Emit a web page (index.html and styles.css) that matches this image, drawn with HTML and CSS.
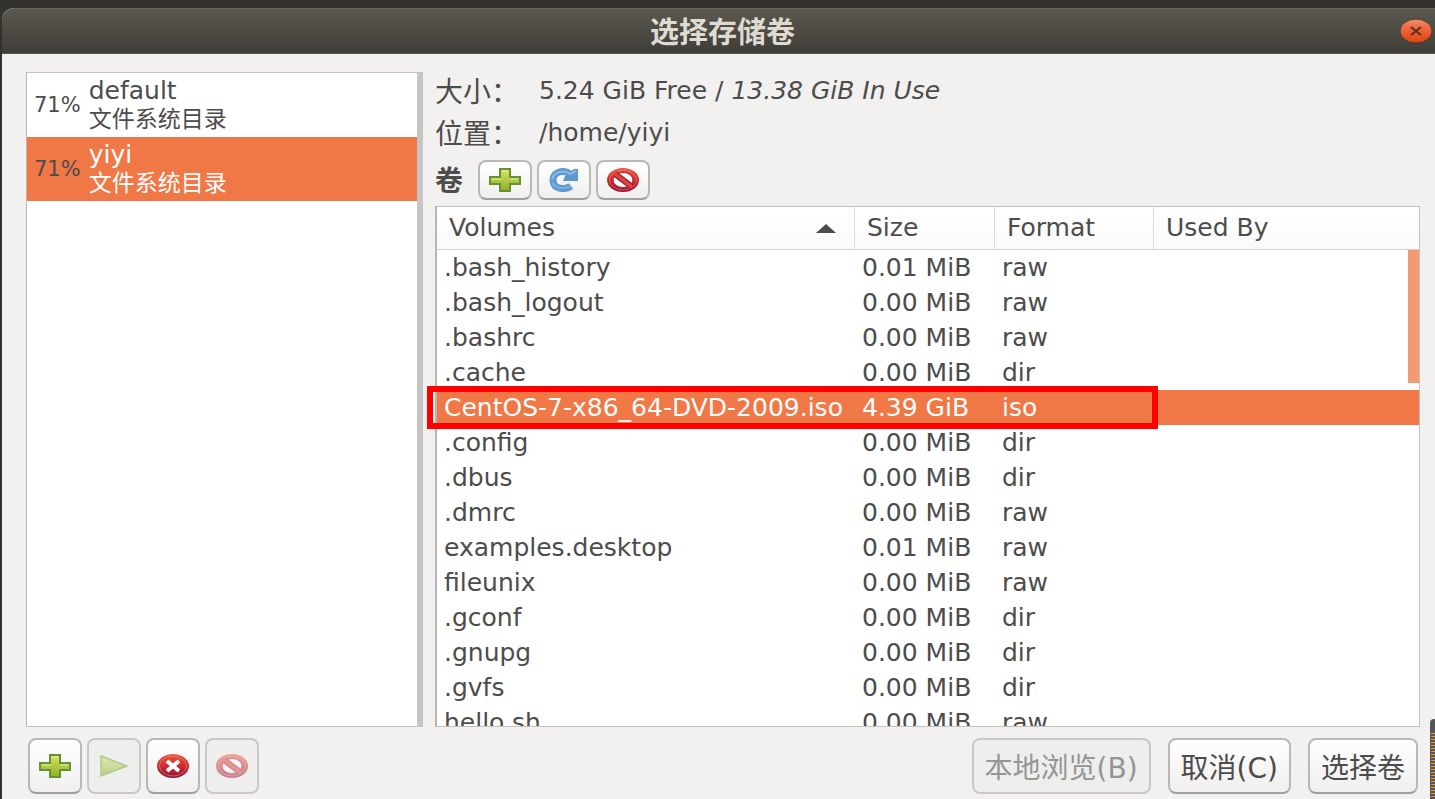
FILE: index.html
```
<!DOCTYPE html>
<html lang="zh-CN">
<head>
  <meta charset="UTF-8">
  <title>选择存储卷</title>
  <link rel="stylesheet" href="styles.css">
</head>
<body>

<!-- Shared gradients and icons -->
<svg class="defs" width="0" height="0" aria-hidden="true">
  <defs>
    <linearGradient id="green" x1="0" y1="0" x2="0" y2="1">
      <stop offset="0" stop-color="#d6e665"/>
      <stop offset="1" stop-color="#8fae26"/>
    </linearGradient>
    <linearGradient id="red" x1="0" y1="0" x2="0" y2="1">
      <stop offset="0" stop-color="#ea5a3c"/>
      <stop offset="0.5" stop-color="#cf2b33"/>
      <stop offset="1" stop-color="#8d1238"/>
    </linearGradient>
    <linearGradient id="orange" x1="0" y1="0" x2="0" y2="1">
      <stop offset="0" stop-color="#f58a68"/>
      <stop offset="0.5" stop-color="#ec5f35"/>
      <stop offset="1" stop-color="#dc4410"/>
    </linearGradient>
    <symbol id="icon-add" viewBox="0 0 32 24">
      <path d="M11 1h10v8h10v7H21v7H11v-7H1V9h10z" fill="url(#green)" stroke="#649334" stroke-width="2"/>
      <path d="M13 3h6M3 11h9M21 11h8" stroke="#e8f09a" stroke-width="1"/>
    </symbol>
    <symbol id="icon-stop" viewBox="0 0 32 24">
      <ellipse cx="16" cy="12" rx="16" ry="12" fill="url(#red)"/>
      <ellipse cx="16" cy="12" rx="13.5" ry="10" fill="none" stroke="#f08a7c" stroke-opacity=".55"/>
      <ellipse cx="16" cy="12" rx="10" ry="7.500" fill="#fff" stroke="#b52232" stroke-width="1"/>
      <path d="M8 6l16 12" stroke="#b52232" stroke-width="6"/>
      <path d="M7 5l18 14" stroke="#d9453f" stroke-width="3"/>
    </symbol>
    <symbol id="icon-delete" viewBox="0 0 32 24">
      <ellipse cx="16" cy="12" rx="16" ry="12" fill="url(#red)"/>
      <ellipse cx="16" cy="12" rx="13.5" ry="10" fill="none" stroke="#f08a7c" stroke-opacity=".6"/>
      <path d="M10 7l12 10M22 7L10 17" stroke="#fff" stroke-width="4"/>
    </symbol>
    <symbol id="icon-refresh" viewBox="0 0 32 24">
      <path d="M23 18C18 22 5 22 5 12C5 3 17 1 23 7" fill="none" stroke="#5f98d1" stroke-width="7"/>
      <path d="M23 3L26 1H30V13H15L17 8z" fill="#5f98d1"/>
      <path d="M4 12C5 4 16 1 22 6L28 3" fill="none" stroke="#8fbbe5" stroke-width="2"/>
      <path d="M4 14C6 20 15 22 23 18" fill="none" stroke="#7fafe0" stroke-width="2"/>
    </symbol>
    <symbol id="icon-play" viewBox="0 0 32 24">
      <path d="M3 2l26 10L3 22z" fill="url(#green)" stroke="#6fa83a" stroke-width="1.500"/>
    </symbol>
  </defs>
</svg>

<div class="dialog">
  <header class="titlebar">
    <h1 class="title">选择存储卷</h1>
    <button class="close" aria-label="关闭">
      <svg width="34" height="26" viewBox="0 0 34 26">
        <ellipse cx="17" cy="13" rx="16" ry="12" fill="url(#orange)" stroke="#4b3d35" stroke-width="1"/>
        <path d="M12 9l10 8M22 9l-10 8" stroke="#57331a" stroke-width="2"/>
      </svg>
    </button>
  </header>

  <main class="content">
    <!-- Storage pools -->
    <ul class="pools">
      <li class="pool">
        <span class="percent">71%</span>
        <span class="pool-text"><span class="pool-name">default</span><span class="pool-type">文件系统目录</span></span>
      </li>
      <li class="pool selected">
        <span class="percent">71%</span>
        <span class="pool-text"><span class="pool-name">yiyi</span><span class="pool-type">文件系统目录</span></span>
      </li>
    </ul>

    <section class="details">
      <dl class="info">
        <dt>大小：</dt><dd>5.24 GiB Free / <em>13.38 GiB In Use</em></dd>
        <dt>位置：</dt><dd>/home/yiyi</dd>
      </dl>
      <div class="toolbar">
        <h2 class="toolbar-title">卷</h2>
        <button class="btn" aria-label="新建卷"><svg class="icon"><use href="#icon-add"/></svg></button>
        <button class="btn" aria-label="刷新"><svg class="icon"><use href="#icon-refresh"/></svg></button>
        <button class="btn" aria-label="删除卷"><svg class="icon"><use href="#icon-stop"/></svg></button>
      </div>

      <!-- Volumes of the selected pool -->
      <div class="volumes">
        <div class="scroller">
          <table>
            <colgroup><col class="col-name"><col class="col-size"><col class="col-format"><col></colgroup>
            <thead>
              <tr>
                <th><span class="sorted">Volumes <svg width="20" height="9" viewBox="0 0 20 9"><path d="M0 9L10 0L20 9z" fill="#4c4c4c"/></svg></span></th>
                <th>Size</th><th>Format</th><th>Used By</th>
              </tr>
            </thead>
            <tbody>
              <tr><td>.bash_history</td><td>0.01 MiB</td><td>raw</td><td></td></tr>
              <tr><td>.bash_logout</td><td>0.00 MiB</td><td>raw</td><td></td></tr>
              <tr><td>.bashrc</td><td>0.00 MiB</td><td>raw</td><td></td></tr>
              <tr><td>.cache</td><td>0.00 MiB</td><td>dir</td><td></td></tr>
              <tr class="selected"><td>CentOS-7-x86_64-DVD-2009.iso</td><td>4.39 GiB</td><td>iso</td><td></td></tr>
              <tr><td>.config</td><td>0.00 MiB</td><td>dir</td><td></td></tr>
              <tr><td>.dbus</td><td>0.00 MiB</td><td>dir</td><td></td></tr>
              <tr><td>.dmrc</td><td>0.00 MiB</td><td>raw</td><td></td></tr>
              <tr><td>examples.desktop</td><td>0.01 MiB</td><td>raw</td><td></td></tr>
              <tr><td>fileunix</td><td>0.00 MiB</td><td>raw</td><td></td></tr>
              <tr><td>.gconf</td><td>0.00 MiB</td><td>dir</td><td></td></tr>
              <tr><td>.gnupg</td><td>0.00 MiB</td><td>dir</td><td></td></tr>
              <tr><td>.gvfs</td><td>0.00 MiB</td><td>dir</td><td></td></tr>
              <tr><td>hello.sh</td><td>0.00 MiB</td><td>raw</td><td></td></tr>
            </tbody>
          </table>
        </div>
        <div class="thumb"></div>
        <div class="highlight"></div>
      </div>
    </section>
  </main>

  <footer class="actions">
    <button class="btn" aria-label="添加池"><svg class="icon"><use href="#icon-add"/></svg></button>
    <button class="btn" aria-label="启动池" disabled><svg class="icon"><use href="#icon-play"/></svg></button>
    <button class="btn" aria-label="停止池"><svg class="icon"><use href="#icon-delete"/></svg></button>
    <button class="btn" aria-label="删除池" disabled><svg class="icon"><use href="#icon-stop"/></svg></button>
    <span class="spacer"></span>
    <button class="btn text" disabled>本地浏览(B)</button>
    <button class="btn text">取消(C)</button>
    <button class="btn text">选择卷</button>
  </footer>
</div>

<!-- Edge of the window behind -->
<div class="behind"></div>

</body>
</html>
```
FILE: styles.css
```
* {
  box-sizing: border-box;
}

body {
  margin: 0;
  height: 100vh;
  overflow: hidden;
  padding: 8px 0 0 2px;
  background: #33322e;
  color: #4c4c4c;
  font-family: "DejaVu Sans", "Noto Sans CJK SC", sans-serif;
  font-size: 25px;
}

.defs {
  position: absolute;
}

.dialog {
  display: flex;
  flex-direction: column;
  height: 100%;
  background: #f2f1ef;
  border-top-left-radius: 12px;
}

/* Title bar */
.titlebar {
  display: flex;
  align-items: center;
  height: 46px;
  flex: none;
  padding-right: 2px;
  background: linear-gradient(#5b584f, #3f3d38);
  border-top: 1px solid #66655a;
  border-bottom: 1px solid #5b5955;
  border-top-left-radius: 12px;
}

.title {
  flex: 1;
  margin: 0;
  padding: 4px 0 0 44px;
  color: #dfdbd2;
  font-size: 29px;
  line-height: 40px;
  text-align: center;
}

.close {
  display: flex;
  padding: 0;
  border: none;
  background: none;
}

/* Main area */
.content {
  display: flex;
  flex: 1;
  min-height: 0;
  gap: 12px;
  padding: 18px 15px 0 24px;
}

.pools {
  flex: 0 0 397px;
  margin: 0;
  padding: 0;
  list-style: none;
  background: #fff;
  border: 1px solid #c4c2be;
  border-left-color: #b8b6b1;
  border-right: 6px solid #c6c5c3;
}

.pool {
  display: flex;
  align-items: center;
  gap: 8px;
  height: 64px;
  padding-left: 7px;
}

.percent {
  font-size: 21px;
}

.pool-name,
.pool-type {
  display: block;
  line-height: 28px;
}

.pool-type {
  font-size: 23px;
}

.selected {
  background: #f07746;
}

.selected .pool-text,
tr.selected {
  color: #fff;
}

.details {
  display: flex;
  flex-direction: column;
  flex: 1;
  min-width: 0;
}

.info {
  display: grid;
  grid-template-columns: 104px 1fr;
  margin: 0;
  line-height: 42px;
}

.info dt {
  font-size: 28px;
}

.info dd {
  margin: 0;
  line-height: 38px;
}

.toolbar {
  display: flex;
  align-items: center;
  gap: 5px;
  margin: 4px 0 6px;
}

.toolbar-title {
  width: 38px;
  margin: 0;
  padding-top: 4px;
  font-size: 28px;
  line-height: 36px;
}

.btn {
  display: flex;
  align-items: center;
  justify-content: center;
  width: 54px;
  height: 40px;
  padding: 0;
  color: #4c4c4c;
  font: inherit;
  background: linear-gradient(#fff, #f0efee);
  border: 2px solid #b9b8b6;
  border-bottom-color: #a19f9c;
  border-radius: 8px;
}

.btn:disabled {
  color: #959595;
  background: #eeeeed;
  border-color: #c9c8c7;
}

.btn:disabled .icon {
  opacity: 0.5;
}

.icon {
  width: 32px;
  height: 24px;
}

/* Volume table */
.volumes {
  position: relative;
  flex: 1;
  min-height: 0;
}

.scroller {
  height: 100%;
  overflow: hidden;
  background: #fff;
  border: 1px solid #c4c2be;
  border-left: 2px solid #b8b6b1;
}

table {
  width: 100%;
  table-layout: fixed;
  border-collapse: separate;
  border-spacing: 0;
}

.col-name {
  width: 418px;
}

.col-size {
  width: 140px;
}

.col-format {
  width: 159px;
}

th {
  height: 43px;
  padding: 0 12px;
  font-weight: normal;
  line-height: 42px;
  text-align: left;
  background: linear-gradient(#fff, #fafafa);
  border-right: 1px solid #dcdbd9;
  border-bottom: 1px solid #d4d2d0;
}

th:last-child {
  border-right: none;
}

.sorted {
  display: flex;
  align-items: center;
  justify-content: space-between;
  padding-right: 6px;
}

td {
  height: 35px;
  padding: 0 7px;
  line-height: 35px;
  white-space: nowrap;
}

.thumb {
  position: absolute;
  top: 44px;
  right: 1px;
  width: 11px;
  height: 133px;
  background: #f39a73;
}

/* Red frame around the chosen volume */
.highlight {
  position: absolute;
  top: 180px;
  left: -8px;
  width: 731px;
  height: 43px;
  border: 6px solid #f00;
}

/* Bottom buttons */
.actions {
  display: flex;
  flex: none;
  gap: 5px;
  padding: 11px 17px 5px 26px;
}

.actions .btn {
  height: 56px;
}

.actions .text {
  width: auto;
  margin-left: 12px;
  padding: 0 11px;
  font-size: 28px;
}

.spacer {
  flex: 1;
}

.behind {
  position: absolute;
  right: 0;
  bottom: 0;
  width: 5px;
  height: 80px;
  padding: 14px 0 0 1px;
  background: repeating-linear-gradient(#f39c1f 0 1px, #55565a 1px 3px) content-box, #55565a;
  border-top-left-radius: 4px;
}
```
